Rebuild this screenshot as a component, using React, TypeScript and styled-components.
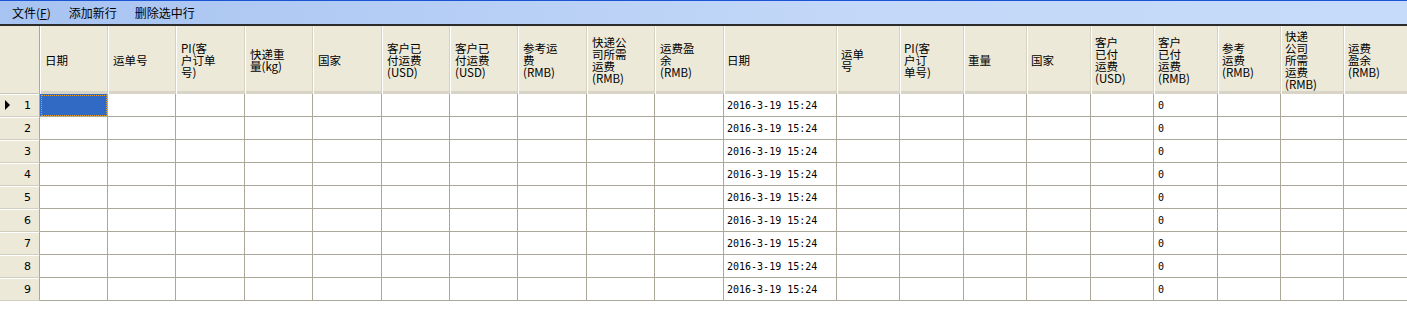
import React from 'react';
import styled, { createGlobalStyle } from 'styled-components';

const GlobalStyle = createGlobalStyle`
  html, body {
    margin: 0;
    padding: 0;
    background: #fff;
  }
  body {
    font-family: "Noto Sans CJK SC", "DejaVu Sans", sans-serif;
    font-size: 12px;
    color: #000;
  }
`;

interface Column {
  width: number;
  title: string[];
  pad: number;
  value?: string;
}

const columns: Column[] = [
  { width: 68, title: ['日期'], pad: 5 },
  { width: 68, title: ['运单号'], pad: 5 },
  { width: 69, title: ['PI(客', '户订单', '号)'], pad: 5 },
  { width: 68, title: ['快递重', '量(kg)'], pad: 5 },
  { width: 69, title: ['国家'], pad: 5 },
  { width: 68, title: ['客户已', '付运费', '(USD)'], pad: 5 },
  { width: 68, title: ['客户已', '付运费', '(USD)'], pad: 5 },
  { width: 69, title: ['参考运', '费', '(RMB)'], pad: 5 },
  { width: 68, title: ['快递公', '司所需', '运费', '(RMB)'], pad: 5 },
  { width: 69, title: ['运费盈', '余', '(RMB)'], pad: 5 },
  { width: 113, title: ['日期'], pad: 3, value: '2016-3-19 15:24' },
  { width: 63, title: ['运单', '号'], pad: 4 },
  { width: 64, title: ['PI(客', '户订', '单号)'], pad: 4 },
  { width: 63, title: ['重量'], pad: 4 },
  { width: 64, title: ['国家'], pad: 4 },
  { width: 63, title: ['客户', '已付', '运费', '(USD)'], pad: 4 },
  { width: 64, title: ['客户', '已付', '运费', '(RMB)'], pad: 4, value: '0' },
  { width: 63, title: ['参考', '运费', '(RMB)'], pad: 4 },
  { width: 63, title: ['快递', '公司', '所需', '运费', '(RMB)'], pad: 4 },
  { width: 64, title: ['运费', '盈余', '(RMB)'], pad: 4 },
];

const template = `40px ${columns.map((c) => `${c.width}px`).join(' ')}`;
const rows = [1, 2, 3, 4, 5, 6, 7, 8, 9];

const MenuBar = styled.div`
  display: flex;
  align-items: center;
  height: 23px;
  padding-left: 3px;
  border-top: 1px solid #1b55d6;
  border-bottom: 2px solid #2b2b2b;
  background: linear-gradient(to right, #a7c3f1, #c3d8f8 60%, #c6dafa);
`;

const MenuItem = styled.span`
  padding: 0 9px;
  font-size: 12px;
  line-height: 23px;
  white-space: nowrap;

  u {
    text-decoration: underline;
    text-underline-offset: 1px;
  }
`;

const Grid = styled.div`
  display: flex;
  flex-direction: column;
  width: max-content;
`;

const Row = styled.div<{ $height: number }>`
  display: grid;
  grid-template-columns: ${template};
  height: ${(p) => p.$height}px;
`;

const Corner = styled.div`
  background: #ece9d8;
  border-right: 1px solid #aca899;
  border-bottom: 1px solid #cbc7b8;
`;

const HeaderCell = styled.div<{ $pad: number }>`
  display: flex;
  flex-direction: column;
  justify-content: center;
  padding-left: ${(p) => p.$pad}px;
  background: #ece9d8;
  border-right: 1px solid #d6d2c2;
  box-shadow: inset 1px 0 0 #fff, inset 0 -3px 0 #d9d5c6, inset 0 -1px 0 #c5c1b2;
  overflow: hidden;
`;

const HeaderLine = styled.div`
  display: block;
  height: 12px;
  font-size: 11.5px;
  line-height: 12px;
  white-space: nowrap;
`;

const RowHead = styled.div`
  display: flex;
  align-items: center;
  justify-content: space-between;
  padding: 0 8px 0 5px;
  background: #ece9d8;
  border-right: 1px solid #aca899;
  border-bottom: 1px solid #d2cebf;
  box-shadow: inset 0 1px 0 #fff;
  font-family: "DejaVu Sans", sans-serif;
  font-size: 11px;
`;

const Pointer = styled.span`
  width: 0;
  height: 0;
  border-top: 5px solid transparent;
  border-bottom: 5px solid transparent;
  border-left: 5px solid #000;
`;

const Cell = styled.div<{ $pad: number; $selected?: boolean }>`
  display: flex;
  align-items: center;
  padding-left: ${(p) => p.$pad}px;
  background: ${(p) => (p.$selected ? '#316ac5' : '#fff')};
  border-right: 1px solid #aca899;
  border-bottom: 1px solid #aca899;
  outline: ${(p) => (p.$selected ? '1px dotted #e8a020' : 'none')};
  outline-offset: -2px;
  font-family: "DejaVu Sans Mono", "Liberation Mono", monospace;
  font-size: 10px;
  white-space: nowrap;
  overflow: hidden;
`;

export default function App() {
  return (
    <>
      <GlobalStyle />
      <MenuBar>
        <MenuItem>
          文件(<u>F</u>)
        </MenuItem>
        <MenuItem>添加新行</MenuItem>
        <MenuItem>删除选中行</MenuItem>
      </MenuBar>
      <Grid>
        <Row $height={68}>
          <Corner />
          {columns.map((c, i) => (
            <HeaderCell key={i} $pad={c.pad}>
              {c.title.map((line, j) => (
                <HeaderLine key={j}>{line}</HeaderLine>
              ))}
            </HeaderCell>
          ))}
        </Row>
        {rows.map((n) => (
          <Row key={n} $height={23}>
            <RowHead>
              {n === 1 ? <Pointer /> : <span />}
              <span>{n}</span>
            </RowHead>
            {columns.map((c, i) => (
              <Cell key={i} $pad={c.pad} $selected={n === 1 && i === 0}>
                {c.value ?? ''}
              </Cell>
            ))}
          </Row>
        ))}
      </Grid>
    </>
  );
}
